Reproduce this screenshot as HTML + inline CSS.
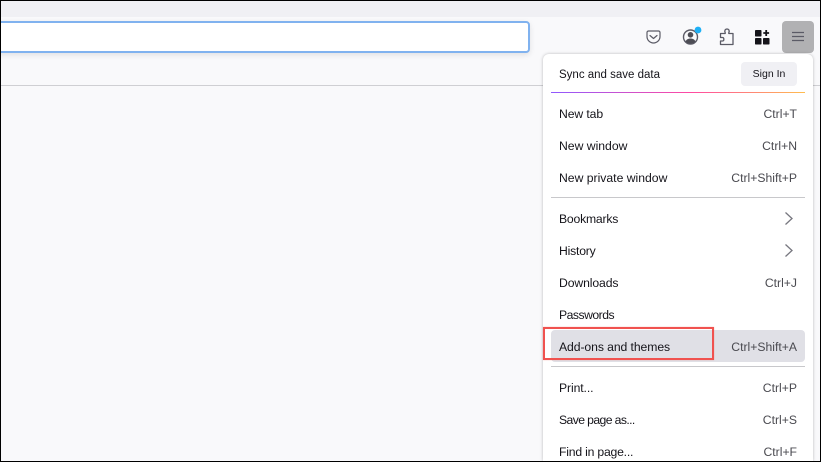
<!DOCTYPE html>
<html><head><meta charset="utf-8"><style>
html,body{margin:0;padding:0}
body{width:821px;height:462px;overflow:hidden;position:relative;background:#000;font-family:"Liberation Sans",sans-serif;}
.a{position:absolute}
.t{position:absolute;left:559px;font-size:12.2px;line-height:16px;color:#15141a;white-space:nowrap}
.k{position:absolute;right:24px;font-size:12.2px;line-height:16px;color:#4a4a50;white-space:nowrap}
.s{position:absolute;left:551px;width:254px;height:1px;background:#c8c8cb}
</style></head><body>
<div class="a" style="left:1px;top:1px;width:819px;height:460px;background:#f9f9fb;overflow:hidden">
<div class="a" style="left:0;top:0;width:819px;height:16px;background:#f0f0f4"></div>
<div class="a" style="left:0;top:84px;width:819px;height:1px;background:#cfcfd3"></div>
<div class="a" style="left:-10px;top:20px;width:535px;height:28px;background:#fff;border:2px solid #80b2ef;border-radius:4px;box-shadow:0 2px 6px rgba(0,0,0,.1)"></div>
</div>
<svg class="a" style="left:0;top:0" width="821" height="60" fill="none">
<path d="M647 32.500a1.500 1.500 0 0 1 1.500-1.500h10a1.500 1.500 0 0 1 1.500 1.500v4a6.500 6.500 0 0 1-13 0z" stroke="#5b5b66" stroke-width="1.200"/>
<path d="M650 35.500l3.500 3 3.500-3" stroke="#5b5b66" stroke-width="1.200" stroke-linecap="round" stroke-linejoin="round"/>
<circle cx="690.500" cy="37" r="7" stroke="#5b5b66" stroke-width="1.400"/>
<circle cx="690.500" cy="34.800" r="2.800" fill="#4d4d55"/>
<path d="M685.500 41.500c.8-2 2.800-3 5-3s4.200 1 5 3a7 7 0 0 1-10 0z" fill="#4d4d55"/>
<circle cx="698" cy="30" r="3.400" fill="#1eb0f5"/>
<path d="M720.500 44.500v-3.500h2c1.800 0 1.800-3.500 0-3.500h-2v-4h4.700v-.8c-1-2 0-3.700 1.800-3.700s2.800 1.700 1.800 3.700v.8h4.200v11z" stroke="#5b5b66" stroke-width="1.300" stroke-linejoin="round"/>
<rect x="755" y="30" width="6.500" height="6.500" rx=".8" fill="#15141a"/>
<rect x="755" y="38" width="6.500" height="6.500" rx=".8" fill="#15141a"/>
<rect x="763" y="38" width="6.500" height="6.500" rx=".8" fill="#15141a"/>
<path d="M766.200 30v6M763.300 33h5.800" stroke="#15141a" stroke-width="1.800"/>
<rect x="782" y="21" width="32" height="32" rx="4" fill="#b1b1b3"/>
<path d="M792 32.500h12M792 36.500h12M792 40.500h12" stroke="#5b5b66" stroke-width="1.200"/>
</svg>
<div class="a" style="left:543px;top:54px;width:270px;height:407px;background:#fff;border-radius:6px 6px 0 0;box-shadow:0 0 3px rgba(0,0,0,.25)"></div>
<div class="t" style="top:67px;font-size:11.500px">Sync and save data</div>
<div class="a" style="left:741px;top:62px;width:56px;height:24px;background:#f0f0f4;border-radius:4px;font-size:10.500px;line-height:24px;text-align:center;color:#15141a">Sign In</div>
<div class="a" style="left:551px;top:92px;width:254px;height:1px;background:linear-gradient(90deg,#9059ff,#ff4aa2 55%,#ffbd4f)"></div>
<div class="t" style="top:106px;letter-spacing:-.1px">New tab</div><div class="k" style="top:106px">Ctrl+T</div>
<div class="t" style="top:138px">New window</div><div class="k" style="top:138px">Ctrl+N</div>
<div class="t" style="top:170px">New private window</div><div class="k" style="top:170px">Ctrl+Shift+P</div>
<div class="s" style="top:197px"></div>
<div class="t" style="top:211px;letter-spacing:-.2px">Bookmarks</div>
<div class="t" style="top:243px;letter-spacing:-.2px">History</div>
<svg class="a" style="left:780px;top:208px" width="16" height="54" fill="none"><path d="M5.500 4.500l6.500 6-6.500 6M5.500 36.500l6.500 6-6.500 6" stroke="#77777f" stroke-width="1.300"/></svg>
<div class="t" style="top:275px;letter-spacing:-.1px">Downloads</div><div class="k" style="top:275px">Ctrl+J</div>
<div class="t" style="top:307px;letter-spacing:-.5px">Passwords</div>
<div class="a" style="left:551px;top:330px;width:254px;height:32px;background:#e0e0e6;border-radius:4px"></div>
<div class="t" style="top:339px;letter-spacing:-.08px">Add-ons and themes</div><div class="k" style="top:339px">Ctrl+Shift+A</div>
<div class="a" style="left:543px;top:327px;width:167px;height:29px;border:2px solid #f0524f;box-shadow:0 0 1px rgba(240,82,79,.5)"></div>
<div class="s" style="top:366px"></div>
<div class="t" style="top:380px;letter-spacing:-.1px">Print...</div><div class="k" style="top:380px">Ctrl+P</div>
<div class="t" style="top:412px;letter-spacing:-.6px">Save page as...</div><div class="k" style="top:412px">Ctrl+S</div>
<div class="t" style="top:444px;letter-spacing:-.2px">Find in page...</div><div class="k" style="top:444px">Ctrl+F</div>
</body></html>
